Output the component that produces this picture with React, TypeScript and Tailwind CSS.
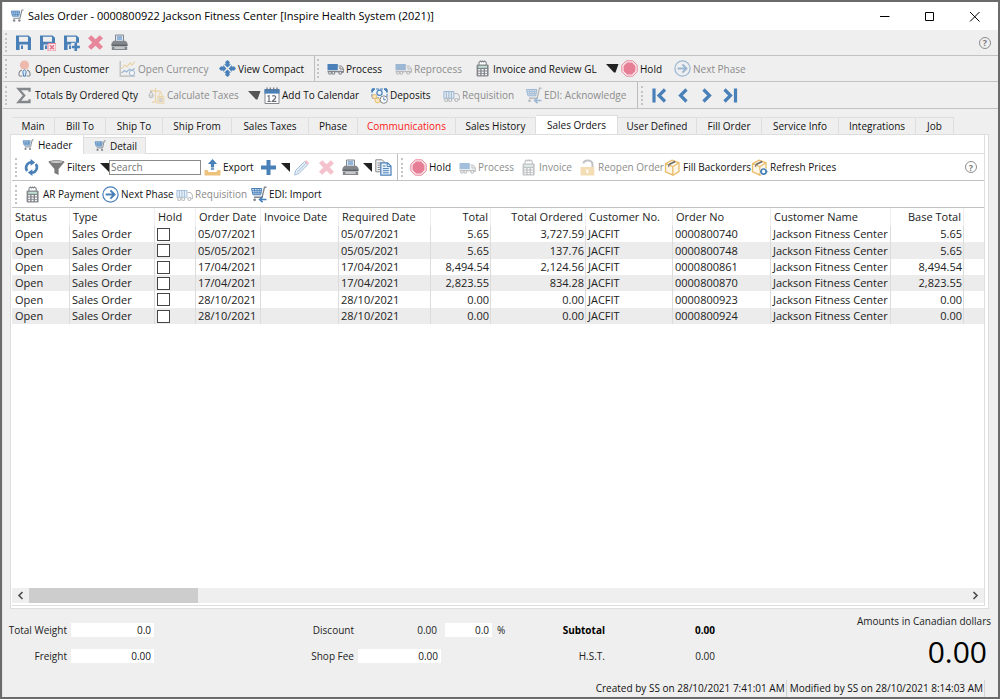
import React from "react";

const BLUE = "#4a80b8";
const GRAY = "#83878c";
const PINK = "#e8879b";
const GOLD = "#e9bd6b";

function Svg({ children, size = "h-[17px] w-[17px]" }: { children: React.ReactNode; size?: string }) {
  return (
    <svg viewBox="0 0 17 17" className={`shrink-0 ${size}`} fill="none" aria-hidden="true">
      {children}
    </svg>
  );
}

const CartShape = () => (
  <>
    <path d="M1.5 2.5h10.2l-1 6.3H3z" fill="#c9dcef" stroke={BLUE} strokeWidth="1" />
    <path d="M2 4.6h9.6M2.4 6.7h8.8M4.4 2.5l.6 6M7 2.5v6M9.4 2.5L9 8.6" stroke={BLUE} strokeWidth=".8" />
    <path d="M16.5 1.2h-2l-2.4 10H4" stroke={GRAY} strokeWidth="1.4" />
  </>
);
const Cart = ({ size }: { size?: string }) => (
  <Svg size={size}>
    <CartShape />
    <circle cx="5" cy="14" r="1.5" fill={GRAY} />
    <circle cx="11.4" cy="14" r="1.5" fill={GRAY} />
  </Svg>
);
const Edi = () => (
  <Svg>
    <CartShape />
    <circle cx="4.6" cy="13.8" r="1.4" fill={GRAY} />
    <path d="M16.5 13.5h-6M12.6 10.8l-3 2.7 3 2.7" stroke={BLUE} strokeWidth="1.6" />
  </Svg>
);
const FloppyShape = () => (
  <path fillRule="evenodd" d="M1 1.5h12.6L16 3.8V16H1zM4 2.8v4.9h9V2.8zM4.6 10.6V16h8.2v-5.4zM6 11.6h2V15H6z" fill={BLUE} />
);
const Save = () => <Svg><FloppyShape /></Svg>;
const SaveClose = () => (
  <Svg>
    <FloppyShape />
    <path d="M9 9.5h8V17H9z" fill="#fbe9ec" stroke={PINK} />
    <path d="M11 11.3l4 4M15 11.3l-4 4" stroke="#df6f87" strokeWidth="1.5" />
  </Svg>
);
const SaveNew = () => (
  <Svg>
    <FloppyShape />
    <path d="M8.2 8.8H17V17H8.2z" fill="#efefef" />
    <path d="M12.8 9v8M8.9 13h8" stroke={BLUE} strokeWidth="2.6" />
  </Svg>
);
const Cross = () => (
  <Svg><path d="M4.2 1.2l4.3 4 4.3-4 3.2 3-4.3 4.3 4.3 4.3-3.2 3-4.3-4-4.3 4-3.2-3 4.3-4.3L1 4.2z" fill={PINK} /></Svg>
);
const Printer = () => (
  <Svg>
    <path d="M4.5 7V1h8v6" fill="#dbe8f5" stroke={GRAY} />
    <path d="M6 3h5M6 5h5" stroke={BLUE} />
    <path d="M2.5 6.8h12L16.5 9v3H.5V9z" fill={GRAY} />
    <path d="M.5 11.2h16" stroke="#4f555b" />
    <path d="M.8 12.4h15.4V16H.8z" fill={GRAY} />
    <path d="M3.4 13.4h10.2v1.2H3.4z" fill="#f4f4f4" />
  </Svg>
);
const Person = () => (
  <Svg>
    <circle cx="8.5" cy="5" r="4.6" fill="#eeb9ad" />
    <path d="M3 15.8c-.4-3 .8-5.2 3-5.8M14 15.8c.4-3-.8-5.2-3-5.8M3 16h3.4M10.6 16H14" stroke={GRAY} strokeWidth="1.1" />
    <path d="M8.5 9.8l1.7 1.6-.8 4.8H7.6l-.8-4.8z" stroke={BLUE} fill="#dbe8f5" />
  </Svg>
);
const Chart = () => (
  <Svg>
    <path d="M1.2 1v15.2H16" stroke={GRAY} strokeWidth="1.2" />
    <path d="M2.5 9l3-4 2.4 1.6L11 3l2 2 2.8-3.4" stroke={GOLD} strokeWidth="1.2" />
    <path d="M2.5 13l3-2.5 2 1.4 3-2.6 2 1.2 3.2-2" stroke={BLUE} strokeWidth="1.2" />
    <circle cx="13" cy="13" r="2.6" stroke={BLUE} fill="#fff" />
  </Svg>
);
const Compact = () => (
  <Svg>
    <path d="M8.5 7.4L5 4.2h1.700L6.200 2 8.500 0l2.300 2-.5 2.200H12zM8.500 9.600L12 12.800h-1.700l.5 2.200-2.300 2-2.300-2 .5-2.200H5zM7.400 8.500L4.200 12v-1.700l-2.200.5L0 8.500l2-2.300 2.200.5V5zM9.600 8.500L12.800 5v1.700l2.200-.5 2 2.300-2 2.300-2.200-.5V12z" fill={BLUE} />
  </Svg>
);
const Truck = () => (
  <Svg>
    <path d="M.5 4h10.3v6.2H.5z" fill={BLUE} />
    <path d="M11.4 6h3l2 2.6v3.8h-5" stroke={GRAY} fill="#e8e8e8" />
    <path d="M13 7v2h3" stroke={GRAY} />
    <path d="M.5 11.6h16" stroke={GRAY} strokeWidth="1.4" />
    <g fill="#eee" stroke={GRAY} strokeWidth="1.1">
      <circle cx="3" cy="12.8" r="1.4" />
      <circle cx="6.4" cy="12.8" r="1.4" />
      <circle cx="13.2" cy="12.8" r="1.4" />
    </g>
  </Svg>
);
const Requisition = () => (
  <Svg>
    <path d="M.9 4.5h10v6.8h-10z" fill="#d6e5f3" stroke={BLUE} />
    <path d="M3.4 5v6M5.9 5v6M8.4 5v6" stroke={BLUE} />
    <path d="M11.4 6.5h3l2 2.4v3.6h-5" stroke={GRAY} strokeWidth="1.1" />
    <g fill="#fff" stroke={GRAY} strokeWidth="1.2">
      <circle cx="3.2" cy="13" r="1.5" />
      <circle cx="7.2" cy="13" r="1.5" />
      <circle cx="13.4" cy="13" r="1.5" />
    </g>
  </Svg>
);
const Calculator = () => (
  <Svg>
    <path d="M5 5V2.2L6.5 1l1 .9 1-.9 1 .9 1-.9 1.700 1.200V5" stroke={GRAY} strokeWidth="1.100" fill="#fff" />
    <rect x="2.600" y="4.400" width="12" height="12" rx="1" fill={GRAY} />
    <path d="M4.200 5.800h8.800v2H4.200z" fill="#bfe0d2" />
    <path fill="#f4f4f4" d="M4.200 9h2v1.500h-2zM7.600 9h2v1.500h-2zM11 9h2v1.500h-2zM4.200 11.400h2v1.500h-2zM7.600 11.400h2v1.500h-2zM11 11.400h2v1.500h-2zM4.200 13.800h2v1.500h-2zM7.600 13.800h2v1.500h-2zM11 13.800h2v1.500h-2z" />
  </Svg>
);
const Stop = () => (
  <Svg>
    <path d="M5.300.8h6.400l4.500 4.500v6.400l-4.500 4.500H5.300L.8 11.700V5.300z" stroke={PINK} fill="#fbe6ea" />
    <path d="M6 2.600h5l3.400 3.400v5L11 14.400H6L2.600 11V6z" fill="#e67f95" />
  </Svg>
);
const Next = () => (
  <Svg>
    <circle cx="8.500" cy="8.500" r="7.600" stroke={BLUE} strokeWidth="1.200" />
    <path d="M3.600 8.500h8.600M8.400 4.400l4.100 4.100-4.100 4.100" stroke={BLUE} strokeWidth="2" />
  </Svg>
);
const Sigma = () => (
  <Svg><path d="M13.500 4.800V2H2.600l5.600 6.500L2.600 15h10.900v-2.800" stroke={GRAY} strokeWidth="2.300" /></Svg>
);
const Scales = () => (
  <Svg>
    <path d="M7.500 1v13M2 3.500l11 1M4 15h5" stroke={GOLD} strokeWidth="1.300" />
    <path d="M3 4L.8 9h4.600zM.8 9.500c1 1.600 3.600 1.600 4.600 0" stroke={GRAY} />
    <path d="M12.500 5L10.300 9.500h5z" stroke={GOLD} fill="#f6e4c2" />
    <rect x="9.800" y="10" width="6" height="6.200" stroke={GOLD} fill="#f6e4c2" />
    <path d="M11 12h3.600M11 14h3.600" stroke={GRAY} />
  </Svg>
);
const Calendar = () => (
  <Svg>
    <path d="M2 2.500h14v14H2z" fill="#fff" stroke={GRAY} />
    <path d="M1.500 2h15v4.600h-15z" fill={BLUE} />
    <path d="M4 .5v3M7.300.5v3M10.700.5v3M14 .5v3" stroke="#6c7278" strokeWidth="1.200" />
    <path d="M4.500 9.300L6 8.600v6M4.400 14.500h3.400M9.300 9.300c1.500-1.200 3.800-.5 3.300 1.200-.3 1.200-2 2.200-3.200 3.900h4" stroke="#6c7278" strokeWidth="1.200" />
  </Svg>
);
const Deposits = () => (
  <Svg>
    <path d="M1 2h15v9H1z" fill="#edf3fa" stroke={BLUE} strokeDasharray="3 1" />
    <path d="M1 2h3L1 5zM16 2h-3l3 3z" fill={BLUE} stroke={BLUE} />
    <circle cx="8.500" cy="5.800" r="2.600" stroke={BLUE} strokeWidth="1.200" />
    <g fill="#fae6bf" stroke={GOLD}>
      <circle cx="3.500" cy="9.500" r="2.100" />
      <circle cx="6.500" cy="13.500" r="2.400" />
    </g>
    <circle cx="12.800" cy="12.600" r="3.700" fill="#fff" stroke={GRAY} />
    <path d="M12.800 10.400v2.400h2" stroke={BLUE} />
  </Svg>
);
const Refresh = () => (
  <Svg>
    <path d="M4.200 12A5.500 5.500 0 0 1 9 3.200M12.800 5A5.500 5.500 0 0 1 8 13.800" stroke={BLUE} strokeWidth="2.600" />
    <path d="M7.600 0l4.600 3.400-4.600 3.400zM9.400 10.200V17l-4.600-3.400z" fill={BLUE} />
  </Svg>
);
const Funnel = () => (
  <Svg>
    <path d="M.5 3c0-2.300 16-2.300 16 0L10.600 10v6L6.400 14V10z" fill="#7b7b7b" />
    <ellipse cx="8.500" cy="3" rx="6" ry="1" fill="#c9c9c9" />
  </Svg>
);
const Export = () => (
  <Svg>
    <path d="M.5 11h3l1 2h8l1-2h3v5.500H.5z" fill="#ecc27c" />
    <path d="M8.500 0l4.600 5h-3v3.400H6.900V5h-3zM6.900 9.300h3.200v1.500H6.900z" fill={BLUE} />
  </Svg>
);
const Plus = () => <Svg><path d="M6.500 1h4v5.500H16v4h-5.500V16h-4v-5.500H1v-4h5.500z" fill={BLUE} /></Svg>;
const Pencil = () => (
  <Svg>
    <path d="M2.800 11.200L11.500 2.500l3.200 3.200L6 14.400 1.500 16z" fill="#cfe0f1" stroke={BLUE} />
    <path d="M11.500 2.500l1.600-1.600 3.200 3.200-1.600 1.600z" fill={PINK} />
    <path d="M4.500 12.800l8.600-8.600" stroke={BLUE} />
  </Svg>
);
const Copy = () => (
  <Svg>
    <path d="M.8.8h6.400l3 3v9H.8z" fill="#f5f5f5" stroke={GRAY} />
    <path d="M2.500 4h4M2.500 6.200h3M2.500 8.400h3M2.500 10.600h3" stroke={GRAY} />
    <path d="M5.800 3.800h6.800l3.400 3.400v9H5.800z" fill="#eaf2fa" stroke={BLUE} strokeWidth="1.200" />
    <path d="M12.200 3.800v3.800H16M7.800 7h2.800M7.800 9.600h6M7.800 11.700h6M7.800 13.800h6" stroke={BLUE} />
  </Svg>
);
const Lock = () => (
  <Svg>
    <path d="M4.500 4.500C5 .3 13.500.2 13.500 5.500V8" stroke={GRAY} strokeWidth="2" />
    <path d="M1.500 8h13.800v8.500H1.500z" fill={GOLD} />
    <path d="M8.400 10.500v3.500" stroke="#fff" strokeWidth="1.800" />
  </Svg>
);
const BoxShape = () => (
  <>
    <path d="M8 1.200l7 2.600v8.800L9 16.200l-7.500-3.400V4.600zM1.500 4.600L8.800 7.600 15 3.800M8.800 7.600v8.400" stroke={GOLD} strokeWidth="1.300" fill="#fdf5e5" />
    <path d="M4.600 5.800l6.600-3.200" stroke="#6a6a6a" strokeWidth="1.700" />
    <path d="M4.600 5.500v2.600" stroke="#8a8a8a" strokeWidth="1.300" />
  </>
);
const Box = () => <Svg><BoxShape /></Svg>;
const BoxRefresh = () => (
  <Svg>
    <BoxShape />
    <circle cx="12.600" cy="12.600" r="4.200" fill="#fff" />
    <circle cx="12.600" cy="12.600" r="2.600" stroke={BLUE} strokeWidth="1.700" />
    <path d="M9 12.600h2M14.500 12.600h2" stroke={BLUE} strokeWidth="1.500" />
  </Svg>
);
const NavFirst = () => <Svg><path d="M3 1.500v14M14 2.500l-6 6 6 6" stroke={BLUE} strokeWidth="3.200" /></Svg>;
const NavPrev = () => <Svg><path d="M11.500 2.500l-6 6 6 6" stroke={BLUE} strokeWidth="3.200" /></Svg>;
const NavNext = () => <Svg><path d="M4.500 2.500l6 6-6 6" stroke={BLUE} strokeWidth="3.200" /></Svg>;
const NavLast = () => <Svg><path d="M12.500 1.500v14M1.500 2.500l6 6-6 6" stroke={BLUE} strokeWidth="3.200" /></Svg>;

function Help() {
  return (
    <button aria-label="Help" className="flex h-3 w-3 items-center justify-center rounded-full border border-[#8d8d8d] text-[9px] leading-none font-bold text-[#7d7d7d]">
      ?
    </button>
  );
}

function Drop({ label, soft = false }: { label: string; soft?: boolean }) {
  return (
    <button aria-label={label} className="flex w-[15px] shrink-0 items-center">
      <svg viewBox="0 0 13 9" className="h-[9px] w-[13px]" aria-hidden="true">
        <path d="M0 0h12.500L9.500 8.500H8z" fill={soft ? "#555" : "#222"} />
      </svg>
    </button>
  );
}

function Corner({ label, className = "" }: { label: string; className?: string }) {
  return (
    <button aria-label={label} className={`shrink-0 ${className}`}>
      <svg viewBox="0 0 9 9" className="h-[9px] w-[9px]" aria-hidden="true">
        <path d="M0 0h9v9z" fill="#222" />
      </svg>
    </button>
  );
}

const Grip = () => <span className="h-[19px] w-0 shrink-0 border-l-2 border-dotted border-[#c4c4c4]" />;
const Divider = () => <span className="h-full w-px shrink-0 bg-[#bdbdbd]" />;

type ToolProps = { icon: React.ReactNode; label: string; className?: string; off?: boolean; textless?: boolean };

function Tool({ icon, label, className = "", off = false, textless = false }: ToolProps) {
  return (
    <button
      disabled={off}
      aria-label={label}
      className={`flex shrink-0 items-center gap-0.5 whitespace-nowrap ${className}`}
    >
      <span className={off ? "opacity-50" : ""}>{icon}</span>
      {!textless && <span className={off ? "text-[#8c8c8c]" : "text-[#111]"}>{label}</span>}
    </button>
  );
}

const tabs: [string, string][] = [
  ["Main", "w-[43px]"],
  ["Bill To", "w-[51px]"],
  ["Ship To", "w-[57px]"],
  ["Ship From", "w-[69px]"],
  ["Sales Taxes", "w-[77px]"],
  ["Phase", "w-[49px]"],
  ["Communications", "w-[98px]"],
  ["Sales History", "w-[80px]"],
  ["Sales Orders", "w-[82px]"],
  ["User Defined", "w-[79px]"],
  ["Fill Order", "w-[65px]"],
  ["Service Info", "w-[77px]"],
  ["Integrations", "w-[77px]"],
  ["Job", "w-[38px]"],
];

const columns: [string, string, boolean][] = [
  ["Status", "w-[58px]", false],
  ["Type", "w-[85px]", false],
  ["Hold", "w-[41px]", false],
  ["Order Date", "w-[65px]", false],
  ["Invoice Date", "w-[78px]", false],
  ["Required Date", "w-[92px]", false],
  ["Total", "w-[60px]", true],
  ["Total Ordered", "w-[95px]", true],
  ["Customer No.", "w-[87px]", false],
  ["Order No", "w-[98px]", false],
  ["Customer Name", "w-[120px]", false],
  ["Base Total", "w-[73px]", true],
];

const orders = [
  ["05/07/2021", "5.65", "3,727.59", "0000800740"],
  ["05/05/2021", "5.65", "137.76", "0000800748"],
  ["17/04/2021", "8,494.54", "2,124.56", "0000800861"],
  ["17/04/2021", "2,823.55", "834.28", "0000800870"],
  ["28/10/2021", "0.00", "0.00", "0000800923"],
  ["28/10/2021", "0.00", "0.00", "0000800924"],
];

function TitleBar() {
  return (
    <header className="flex h-[28px] shrink-0 items-center bg-white pr-[18px] pl-[7px]">
      <Cart size="h-[14px] w-[14px]" />
      <h1 className="flex-1 pl-1 text-[11px] text-black">
        Sales Order - 0000800922 Jackson Fitness Center [Inspire Health System (2021)]
      </h1>
      <div className="flex items-center gap-[34px] text-black">
        <button aria-label="Minimize">
          <svg viewBox="0 0 11 11" className="h-[11px] w-[11px]" aria-hidden="true"><path d="M1 5.500h9.500" stroke="currentColor" /></svg>
        </button>
        <button aria-label="Maximize">
          <svg viewBox="0 0 11 11" className="h-[11px] w-[11px]" aria-hidden="true"><path d="M1.500 1.500h8v8h-8z" fill="none" stroke="currentColor" /></svg>
        </button>
        <button aria-label="Close">
          <svg viewBox="0 0 11 11" className="h-[11px] w-[11px]" aria-hidden="true"><path d="M1 1l9.500 9.500M10.500 1L1 10.500" stroke="currentColor" /></svg>
        </button>
      </div>
    </header>
  );
}

function MainToolbars() {
  return (
    <div className="shrink-0">
      <div className="flex h-[26px] items-center border-b border-[#c2c2c2] pr-[7px] pl-0.5">
        <Grip />
        <div className="flex flex-1 gap-[7px] pl-2">
          <Tool icon={<Save />} label="Save" textless />
          <Tool icon={<SaveClose />} label="Save and close" textless />
          <Tool icon={<SaveNew />} label="Save and new" textless />
          <Tool icon={<Cross />} label="Delete" textless />
          <Tool icon={<Printer />} label="Print" textless />
        </div>
        <Help />
      </div>
      <div className="flex h-[26px] items-center border-b border-[#c2c2c2] pl-0.5">
        <Grip />
        <Tool icon={<Person />} label="Open Customer" className="ml-[9px] w-[103px]" />
        <Tool icon={<Chart />} label="Open Currency" className="w-[100px]" off />
        <Tool icon={<Compact />} label="View Compact" className="w-[95px]" />
        <Divider />
        <span className="w-0.5" />
        <Grip />
        <Tool icon={<Truck />} label="Process" className="ml-2 w-[68px]" />
        <Tool icon={<Truck />} label="Reprocess" className="w-[79px]" off />
        <Tool icon={<Calculator />} label="Invoice and Review GL" className="w-[132px]" />
        <Drop label="Invoice options" />
        <Tool icon={<Stop />} label="Hold" className="w-[53px]" />
        <Tool icon={<Next />} label="Next Phase" off />
      </div>
      <div className="flex h-[27px] items-center border-b border-[#c2c2c2] pl-0.5">
        <Grip />
        <Tool icon={<Sigma />} label="Totals By Ordered Qty" className="ml-[9px] w-[132px]" />
        <Tool icon={<Scales />} label="Calculate Taxes" className="w-[100px]" off />
        <Drop label="Tax options" soft />
        <Tool icon={<Calendar />} label="Add To Calendar" className="w-[108px]" />
        <Tool icon={<Deposits />} label="Deposits" className="w-[72px]" />
        <Tool icon={<Requisition />} label="Requisition" className="w-[82px]" off />
        <Tool icon={<Edi />} label="EDI: Acknowledge" className="w-[112px]" off />
        <Divider />
        <span className="w-[3px]" />
        <Grip />
        <div className="flex gap-[7px] pl-2">
          <Tool icon={<NavFirst />} label="First record" textless />
          <Tool icon={<NavPrev />} label="Previous record" textless />
          <Tool icon={<NavNext />} label="Next record" textless />
          <Tool icon={<NavLast />} label="Last record" textless />
        </div>
      </div>
    </div>
  );
}

function TabStrip() {
  return (
    <nav className="flex h-[19px] shrink-0 items-end pl-[9px]">
      {tabs.map(([name, width]) => {
        const active = name === "Sales Orders";
        return (
          <button
            key={name}
            className={`shrink-0 border-t border-r border-[#dedede] whitespace-nowrap ${width} ${
              active ? "h-[19px] bg-white" : "h-[17px]"
            } ${name === "Communications" ? "text-[#ff1a1a]" : "text-[#111]"}`}
          >
            {name}
          </button>
        );
      })}
    </nav>
  );
}

function OrderToolbars() {
  return (
    <div className="shrink-0">
      <div className="flex h-[19px] items-end">
        <button className="flex h-[19px] w-[72px] items-center gap-1 border-r border-[#dedede] bg-white pl-[10px]">
          <Cart size="h-3 w-3" />
          Header
        </button>
        <button className="flex h-[17px] w-[62px] items-center gap-1 border-t border-r border-[#dedede] bg-[#efefef] pl-[10px]">
          <Cart size="h-3 w-3" />
          Detail
        </button>
        <span className="h-px flex-1 bg-[#dedede]" />
      </div>
      <div className="flex h-[27px] items-center border-b border-[#c2c2c2] pr-[7px] pl-[3px]">
        <Grip />
        <Tool icon={<Refresh />} label="Refresh" textless className="ml-[6px] w-[25px]" />
        <Tool icon={<Funnel />} label="Filters" className="w-[52px]" />
        <Corner label="Filter options" />
        <input
          aria-label="Search"
          placeholder="Search"
          className="h-[15px] w-[92px] shrink-0 border border-[#8a8a8a] bg-white px-px text-[10px] outline-none placeholder:text-[#757575]"
        />
        <Tool icon={<Export />} label="Export" className="ml-[3px] w-[56px]" />
        <Tool icon={<Plus />} label="Add" textless className="w-[21px]" />
        <Corner label="Add options" className="w-3" />
        <Tool icon={<Pencil />} label="Edit" textless off className="w-[25px]" />
        <Tool icon={<Cross />} label="Delete order" textless off className="w-[24px]" />
        <Tool icon={<Printer />} label="Print order" textless className="w-[21px]" />
        <Corner label="Print options" className="w-3" />
        <Tool icon={<Copy />} label="Copy" textless className="w-[22px]" />
        <Divider />
        <span className="w-[3px]" />
        <Grip />
        <Tool icon={<Stop />} label="Hold" className="ml-[7px] w-[49px]" />
        <Tool icon={<Truck />} label="Process" className="w-[61px]" off />
        <Tool icon={<Calculator />} label="Invoice" className="w-[59px]" off />
        <Tool icon={<Lock />} label="Reopen Order" className="w-[85px]" off />
        <Tool icon={<Box />} label="Fill Backorders" className="w-[87px]" />
        <Tool icon={<BoxRefresh />} label="Refresh Prices" />
        <span className="flex-1" />
        <Help />
      </div>
      <div className="flex h-[27px] items-center border-b border-[#c2c2c2] pl-[3px]">
        <Grip />
        <Tool icon={<Calculator />} label="AR Payment" className="ml-[7px] w-[78px]" />
        <Tool icon={<Next />} label="Next Phase" className="w-[74px]" />
        <Tool icon={<Requisition />} label="Requisition" className="w-[74px]" off />
        <Tool icon={<Edi />} label="EDI: Import" />
      </div>
    </div>
  );
}

function OrdersTable() {
  const cell = "border-r border-[#dcdcdc] p-0 whitespace-nowrap";
  return (
    <table className="w-full table-fixed border-separate border-spacing-0 text-[11px] text-[#222]">
      <thead>
        <tr className="h-[18px] leading-[18px]">
          {columns.map(([name, width, right]) => (
            <th key={name} className={`border-r border-[#eeeeee] p-0 font-normal whitespace-nowrap ${width} ${right ? "pr-0.5 text-right" : "pl-[3px] text-left"}`}>
              {name}
            </th>
          ))}
          <th className="p-0" />
        </tr>
      </thead>
      <tbody>
        {orders.map(([date, total, ordered, number]) => (
          <tr key={number} className="h-4 leading-4 even:bg-[#ececec] nth-[3n+2]:h-[17px]">
            <td className={`${cell} pl-[3px]`}>Open</td>
            <td className={`${cell} pl-0.5`}>Sales Order</td>
            <td className={`${cell} pl-0.5`}>
              <input type="checkbox" aria-label={`Hold ${number}`} className="block h-[13px] w-[13px] appearance-none border border-[#444] bg-white" />
            </td>
            <td className={`${cell} pl-0.5`}>{date}</td>
            <td className={cell} />
            <td className={`${cell} pl-0.5`}>{date}</td>
            <td className={`${cell} pr-px text-right`}>{total}</td>
            <td className={`${cell} pr-px text-right`}>{ordered}</td>
            <td className={`${cell} pl-0.5`}>JACFIT</td>
            <td className={`${cell} pl-0.5`}>{number}</td>
            <td className={`${cell} pl-0.5`}>Jackson Fitness Center</td>
            <td className={`${cell} pr-px text-right`}>{total}</td>
            <td className="p-0" />
          </tr>
        ))}
      </tbody>
    </table>
  );
}

function ScrollBar() {
  return (
    <div className="flex h-[15px] shrink-0 items-center bg-[#efefef] text-[#4a4a4a]">
      <button aria-label="Scroll left" className="flex w-[17px] justify-center">
        <svg viewBox="0 0 7 9" className="h-[9px] w-[7px]" aria-hidden="true"><path d="M5.500 1L2 4.500 5.500 8" fill="none" stroke="currentColor" strokeWidth="1.600" /></svg>
      </button>
      <div className="h-full flex-1"><div className="h-full w-[18%] bg-[#cdcdcd]" /></div>
      <button aria-label="Scroll right" className="flex w-[17px] justify-center">
        <svg viewBox="0 0 7 9" className="h-[9px] w-[7px]" aria-hidden="true"><path d="M1.500 1L5 4.500 1.500 8" fill="none" stroke="currentColor" strokeWidth="1.600" /></svg>
      </button>
    </div>
  );
}

function Footer() {
  const field = "h-[14px] self-center border-0 bg-white pr-[3px] text-right text-[10px] leading-[14px] text-[#111] outline-none";
  return (
    <footer className="shrink-0 text-[#222]">
      <div className="flex justify-between pr-[7px]">
        <div className="grid grid-cols-[64px_83px_204px_83px_60px_108px_110px] content-start gap-y-[10px] pt-[13px] leading-4">
          <label htmlFor="weight" className="text-right">Total Weight</label>
          <input id="weight" defaultValue="0.0" className={`ml-1 w-[83px] ${field}`} />
          <label htmlFor="discount" className="text-right">Discount</label>
          <output className="text-right">0.00</output>
          <div className="flex items-center gap-[5px] pl-2">
            <input id="discount" defaultValue="0.0" className={`w-[47px] shrink-0 ${field}`} />%
          </div>
          <b className="text-right text-black">Subtotal</b>
          <b className="text-right text-black">0.00</b>
          <label htmlFor="freight" className="text-right">Freight</label>
          <input id="freight" defaultValue="0.00" className={`ml-1 w-[83px] ${field}`} />
          <label htmlFor="shop" className="text-right">Shop Fee</label>
          <input id="shop" defaultValue="0.00" className={`ml-1 w-[83px] ${field}`} />
          <span />
          <span className="text-right">H.S.T.</span>
          <span className="text-right">0.00</span>
        </div>
        <div className="pt-1 text-right">
          <p className="leading-4">Amounts in Canadian dollars</p>
          <p className="pt-[3px] pr-1 text-[30px] leading-10 text-black">0.00</p>
        </div>
      </div>
      <div className="mt-2 flex h-[17px] justify-end pr-[13px] leading-[17px] text-[#111]">
        <span className="border-r border-[#d4d4d4] pr-px">Created by SS on 28/10/2021 7:41:01 AM</span>
        <span className="border-r border-[#d4d4d4] pr-px pl-[3px]">Modified by SS on 28/10/2021 8:14:03 AM</span>
      </div>
    </footer>
  );
}

export default function App() {
  return (
    <div className="flex min-h-screen flex-col bg-[#6b6b6b] px-0.5 py-0.5 font-['Open_Sans',sans-serif] text-[10px] leading-4 text-[#111]">
      <div className="flex flex-1 flex-col border-l border-[#e4e4e4] bg-[#efefef]">
        <TitleBar />
        <MainToolbars />
        <div className="h-[6px] shrink-0" />
        <TabStrip />
        <main className="mr-[9px] ml-[7px] flex flex-1 flex-col border border-[#dedede] bg-white pr-[3px] pb-0.5 pl-px">
          <div className="flex flex-1 flex-col border-r border-b border-[#dedede] pb-0.5">
            <OrderToolbars />
            <div className="flex-1"><OrdersTable /></div>
            <ScrollBar />
          </div>
        </main>
        <Footer />
      </div>
    </div>
  );
}
